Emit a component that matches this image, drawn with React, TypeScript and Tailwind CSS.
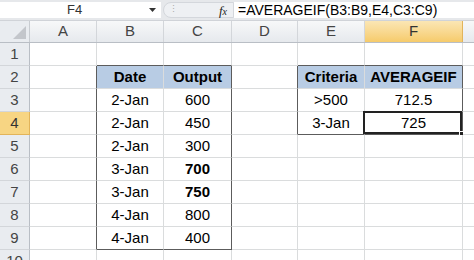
import React from 'react';

const cols = [
  { k: 'A', w: 'w-[67px]' },
  { k: 'B', w: 'w-[67px]' },
  { k: 'C', w: 'w-[68px]' },
  { k: 'D', w: 'w-[66px]' },
  { k: 'E', w: 'w-[67px]' },
  { k: 'F', w: 'w-[98px]' },
  { k: 'G', w: 'w-[40px]' },
];

const data: Record<number, Record<string, string>> = {
  2: { B: 'Date', C: 'Output', E: 'Criteria', F: 'AVERAGEIF' },
  3: { B: '2-Jan', C: '600', E: '>500', F: '712.5' },
  4: { B: '2-Jan', C: '450', E: '3-Jan', F: '725' },
  5: { B: '2-Jan', C: '300' },
  6: { B: '3-Jan', C: '700' },
  7: { B: '3-Jan', C: '750' },
  8: { B: '4-Jan', C: '800' },
  9: { B: '4-Jan', C: '400' },
};

const inLeft = (r: number, c: string) => (c === 'B' || c === 'C') && r >= 2 && r <= 9;
const inRight = (r: number, c: string) => (c === 'E' || c === 'F') && r >= 2 && r <= 4;

function cellClass(r: number, c: string) {
  const right =
    ((c === 'A' || c === 'C') && r >= 2 && r <= 9) || ((c === 'D' || c === 'F') && r >= 2 && r <= 4)
      ? 'border-r-[#5c5c5c]'
      : 'border-r-[#dadcdd]';
  const bottom =
    (r === 1 && ['B', 'C', 'E', 'F'].includes(c)) || (r === 9 && (c === 'B' || c === 'C')) || (r === 4 && (c === 'E' || c === 'F'))
      ? 'border-b-[#5c5c5c]'
      : 'border-b-[#dadcdd]';
  const bg = r === 2 && (inLeft(r, c) || inRight(r, c)) ? 'bg-[#b8cce4]' : 'bg-white';
  const bold = r === 2 || (c === 'C' && (r === 6 || r === 7)) ? 'font-bold' : '';
  return `${right} ${bottom} ${bg} ${bold}`;
}

export default function App() {
  const rows = [1, 2, 3, 4, 5, 6, 7, 8, 9, 10];
  return (
    <div className="w-[474px] h-[260px] overflow-hidden bg-white font-['Liberation_Sans',Arial,sans-serif] text-[15px] text-black">
      {/* formula bar */}
      <div className="flex h-[21px] bg-[#e6e8eb] border-b border-[#d0d3d8]">
        <div className="flex w-[161px] shrink-0 items-center bg-white mt-[2px] mb-[2px] pl-[67px] pr-[5px] text-[13px] text-[#333]">
          <span className="flex-1">F4</span>
          <svg width="7" height="4" viewBox="0 0 7 4"><path d="M0 0h7L3.5 4z" fill="#333" /></svg>
        </div>
        <div className="flex w-[71px] shrink-0 items-center justify-between bg-[#eef0f3] mt-[2px] mb-[2px] ml-[2px] rounded-l-full border border-[#d4d7dc] pl-[5px] pr-[6px]">
          <span className="text-[9px] text-[#aaa]">⋮</span>
          <span className="font-['Liberation_Serif',serif] italic text-[13px] text-[#222] leading-none">
            f<span className="text-[10px]">x</span>
          </span>
        </div>
        <div className="flex flex-1 items-center bg-white mt-[2px] mb-[2px] pl-[4px] text-[14px] text-black whitespace-nowrap">
          =AVERAGEIF(B3:B9,E4,C3:C9)
        </div>
      </div>

      {/* column headers */}
      <div className="flex h-[22px] border-b border-[#b9bec5]">
        <div className="relative w-[30px] shrink-0 h-full bg-[#e9ecf0] border-r border-[#c8ccd1]">
          <svg className="absolute right-[3px] bottom-[3px]" width="13" height="13" viewBox="0 0 13 13">
            <path d="M13 0V13H0z" fill="#c3c6cb" />
          </svg>
        </div>
        {cols.map((col) => (
          <div
            key={col.k}
            className={`${col.w} shrink-0 h-full flex items-center justify-center border-r text-[15px] ${
              col.k === 'F'
                ? 'bg-gradient-to-b from-[#fbe6b4] to-[#f6cb6a] border-[#e2b45a] text-[#333]'
                : 'bg-gradient-to-b from-[#f7f8f9] to-[#e6e9ed] border-[#d3d6da] text-[#444]'
            }`}
          >
            {col.k === 'G' ? '' : col.k}
          </div>
        ))}
      </div>

      {/* grid rows */}
      {rows.map((r) => (
        <div key={r} className="flex h-[23px]">
          <div
            className={`w-[30px] shrink-0 h-full flex items-center justify-center border-r border-b text-[15px] ${
              r === 4
                ? 'bg-[#f7d583] border-r-[#e2b45a] border-b-[#e2b45a] text-[#333]'
                : 'bg-[#e9ecf0] border-r-[#b9bec5] border-b-[#d3d6da] text-[#444]'
            }`}
          >
            {r}
          </div>
          {cols.map((col) => (
            <div
              key={col.k}
              className={`${col.w} shrink-0 relative h-full flex items-center justify-center border-r border-b ${cellClass(r, col.k)}`}
            >
              {data[r]?.[col.k] ?? ''}
              {r === 4 && col.k === 'F' && (
                <div className="absolute left-[-2px] top-[-1px] right-[0px] bottom-[0px] border-2 border-[#222] pointer-events-none">
                  <div className="absolute right-[-4px] bottom-[-4px] w-[5px] h-[5px] bg-[#222] border border-white" />
                </div>
              )}
            </div>
          ))}
        </div>
      ))}
    </div>
  );
}
